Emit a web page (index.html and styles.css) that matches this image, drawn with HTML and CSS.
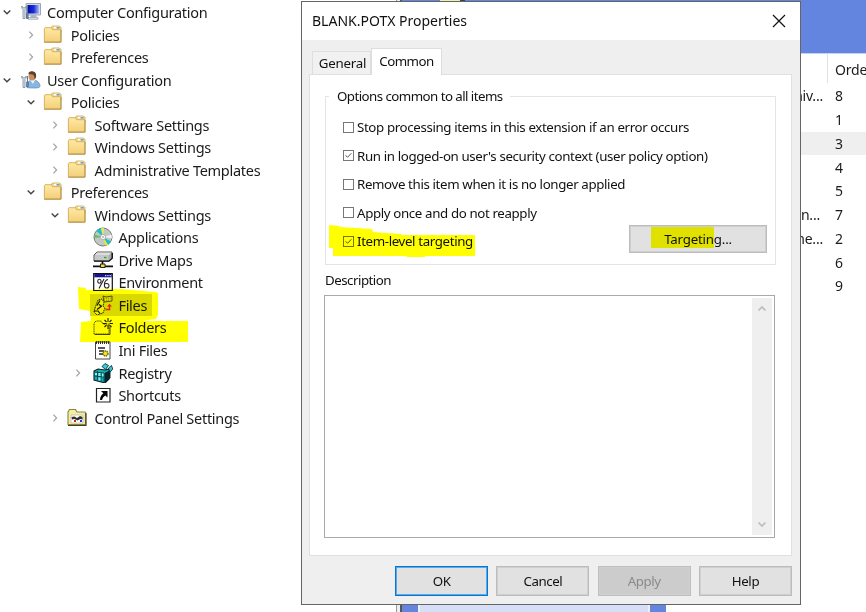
FILE: index.html
```
<!DOCTYPE html>
<html lang="en">
<head>
<meta charset="utf-8">
<title>Group Policy Preferences</title>
<link rel="stylesheet" href="styles.css">
</head>
<body>
<svg width="0" height="0" class="defs">
  <defs>
    <linearGradient id="fold" x1="0" y1="0" x2="0" y2="1"><stop offset="0" stop-color="#ffe9a6"/><stop offset="1" stop-color="#f3cf78"/></linearGradient>
    <linearGradient id="scr" x1="0" y1="0" x2="1" y2="0"><stop offset="0" stop-color="#0508a8"/><stop offset=".55" stop-color="#1b2fd6"/><stop offset="1" stop-color="#a6bcf4"/></linearGradient>
    <symbol id="folder" viewBox="0 0 20 20"><path d="M8.500 5.500V2l1-1h7l1.500 1.500V8z" fill="#f2d98c" stroke="#c9a54c" stroke-width=".8"/><path d="M11 2.600h5" stroke="#fff" stroke-width="1.800"/><path d="M13.500 2.800h3" stroke="#4d96d8" stroke-width="1.400"/><path d="M1.400 17V3.300l.6-.6h6.500l1.200 2h7.600l.6.500V17z" fill="url(#fold)" stroke="#d4ad55" stroke-width=".9"/><path d="M1.200 17.200h17M18 5v12" stroke="#b3924a" fill="none"/></symbol>
    <symbol id="computer" viewBox="0 0 20 20"><path d="M5 1.500h14.500V13H6z" fill="#d5d9e3" stroke="#9da5b4"/><path d="M6.500 3h11.500v8.500H6.500z" fill="url(#scr)"/><path d="M10 13h5l1 2.500H9z" fill="#aeb3bc"/><path d="M7 15.500h10v1.800H7z" fill="#d9dce2" stroke="#8f949c" stroke-width=".6"/><path d="M.8 4v2.200L2 7.500v9h2v-9l1.200-1.300V4L4 5.800H2z" fill="#dbe4ed" stroke="#6d7c8d" stroke-width=".7"/><path d="M6.200 5v6M5.500 11h1.600v5.500H5.500z" fill="#4f91c8" stroke="#56789b"/></symbol>
    <symbol id="user" viewBox="0 0 20 20"><path d="M6 17c0-5 2-7 6-7s7 3 7 6c0 2-3 2-6 2s-7 0-7-1z" fill="#87b6df" stroke="#5f8db8" stroke-width=".7"/><path d="M9 10l3 4 2-4z" fill="#eaf3fb"/><ellipse cx="11" cy="6" rx="3.500" ry="4.500" fill="#c98e61"/><path d="M7.500 4C7 .5 14 0 15 4c.6 3-.5 5-1.500 5 .2-3-1-4-2-4.500z" fill="#5f4030"/><path d="M.8 6v2.200L2 9.500v8h2v-8l1.200-1.300V6L4 7.800H2z" fill="#dbe4ed" stroke="#6d7c8d" stroke-width=".7"/><path d="M6.500 6v6M5.700 12h1.600v5H5.700z" fill="#4f91c8" stroke="#56789b"/></symbol>
    <symbol id="cd" viewBox="0 0 20 20"><circle cx="10" cy="10" r="9" fill="#c3c8c3" stroke="#777"/><path d="M10 10L3.500 4A9 9 0 0 1 8 1.300z" fill="#19bfd0"/><path d="M10 10L8 1.300l3-.2z" fill="#e9ee4b"/><path d="M10 10l8.700-2.500.3 4z" fill="#eee"/><path d="M10 10l8 4.500-3 3.500z" fill="#16bfcb"/><path d="M10 10l5.200 8-2.700.8z" fill="#e7e63a"/><path d="M10 10L1.500 7.500 1.300 11z" fill="#62c266"/><circle cx="10" cy="10" r="2.600" fill="#fff" stroke="#999" stroke-width=".7"/><circle cx="10" cy="10" r=".8" fill="#777"/></symbol>
    <symbol id="drive" viewBox="0 0 20 20"><path d="M4 2h15v6l-3 3H1V5z" fill="#aaa" stroke="#555"/><path d="M4 2.500h14.500l-3 3H1.500z" fill="#ddd"/><path d="M1.500 5.500h14v5h-14z" fill="#c8c8c8"/><path d="M1 11.200h15l3.300-3V3" fill="none" stroke="#111" stroke-width="1.300"/><path d="M11 7.500h2.500" stroke="#18a838" stroke-width="1.300"/><path d="M9.500 11v4M0 16.300h20" stroke="#111" stroke-width="1.700"/><path d="M7.500 14h4.500v3.500H7.500z" fill="#eadf27" stroke="#222"/></symbol>
    <symbol id="env" viewBox="0 0 20 20"><path d="M.7 1.500h18.600v17H.7z" fill="#fff" stroke="#111" stroke-width="1.200"/><path d="M1.300 2h17.400v3.300H1.300z" fill="#14148c"/><path d="M12 3.600h1.300m1 0h1.300m1 0h1.300" stroke="#ddd" stroke-width="1.300"/><g fill="none" stroke="#222" stroke-width="1.100"><ellipse cx="6.400" cy="9.300" rx="1.700" ry="2"/><path d="M11 7L6 16.500M15 7.500c-4.500 1-4.500 8-1.500 8.500s3.500-4.500.3-4.500-2.300 1-2.300 2.200"/></g></symbol>
    <symbol id="files" viewBox="0 0 20 20"><path d="M10 1l3 1 6-1v5l-8 1z" fill="#ddd" stroke="#333" stroke-width=".8"/><path d="M11 3.200h7m-7 2h6" stroke="#888" stroke-dasharray="1 1"/><path d="M2 13l3-8 4-1 2 3-1 4 2 2-2 5-6 2-3-3z" fill="#f0ee88" stroke="#222" stroke-dasharray="1.500 .8"/><path d="M1 16h4l2 2.500m-1-9l3 2m-5 3l4-3m-1-6l-3 5" fill="none" stroke="#111" stroke-width="1.200"/><path d="M12.500 14.500h4v-4" fill="none" stroke="#e02818" stroke-width="1.500"/><path d="M14 11.500l2.500-2.700 2.500 2.700z" fill="#e02818"/></symbol>
    <symbol id="newfolder" viewBox="0 0 20 20"><path d="M1 17V6l2-2h5l2 3h6v10z" fill="#fff9b8" stroke="#444" stroke-dasharray="1.200 .6"/><path d="M2 17.500h15V10" fill="none" stroke="#444"/><path d="M15 1v4m0 3v4M10 6.500h3.500m3 0H20M11.500 3l2 2m5-2l-2 2m-5 5l2-2m5 2l-2-2" stroke="#222" stroke-width="1.100"/></symbol>
    <symbol id="ini" viewBox="0 0 20 20"><path d="M2.500 2h14.500v17H2.500z" fill="#fff" stroke="#444"/><path d="M3.500 1v3m2-3v3m2-3v3m2-3v3m2-3v3m2-3v3m2-3v3" stroke="#333" stroke-width="1"/><path d="M5 8h7m-6 3h5m-5 3h4" stroke="#222" stroke-width="1.500"/><circle cx="12.500" cy="13.500" r="2.500" fill="#f4e52c" stroke="#776b00" stroke-width="1.500" stroke-dasharray="1.500 .6"/></symbol>
    <symbol id="registry" viewBox="0 0 20 20"><path d="M1 8l4-2 7 1 4-1v10l-4 4-11-3z" fill="#18adb0" stroke="#071f25" stroke-width="1.100"/><path d="M1 9l10 1v9M4.500 8v9.500m3.500-8v9M1 13l10 1" fill="none" stroke="#0b4c54"/><path d="M2 10h2v2H2zm3.500 0h2v3h-2zm0 4.500h2v3h-2zm3.500-4h1.500v3H9z" fill="#8cf0ef"/><path d="M11.500 10l6-3v8l-6 5z" fill="#06262c"/><path d="M9 3.500l3-3 3.500 2-3 4zM15.500 5l3-2.500 1.200 3.500-2.500 3z" fill="#35cbd0" stroke="#06363f" stroke-width=".9"/></symbol>
    <symbol id="shortcut" viewBox="0 0 20 20"><path d="M3.500 3.500h13.500v13.500h-13.500z" fill="#fff" stroke="#222" stroke-width="1.200"/><path d="M8 6h6.500v6.500L12.300 10.400Q9.500 12 9 15H7q0-4 3.300-6.700z" fill="#050505"/></symbol>
    <symbol id="panel" viewBox="0 0 20 20"><path d="M1 16.500V4l1.500-2.500h6L10 4h8l.5.600v12z" fill="#f7efa0" stroke="#8a8444" stroke-width="1.100"/><path d="M1 17.500h18V5" fill="none" stroke="#44401c" stroke-width="1.200"/><path d="M4 7h12v8H4z" fill="#fff" stroke="#aaa" stroke-width=".6"/><path d="M4.500 9l3-.5 2.500 1.500 3-2 2.500 1v2.500l-2-.5-3 1.500-3-1.500-2.500.5z" fill="#333"/><path d="M7 12h2v2H7z" fill="#d71d1d"/><path d="M13 12h2v2h-2z" fill="#2537c7"/></symbol>
    <symbol id="down" viewBox="0 0 10 10"><path d="M1.700 3.500L5 6.700l3.300-3.200" fill="none" stroke="#444" stroke-width="1.400"/></symbol>
    <symbol id="right" viewBox="0 0 10 10"><path d="M3.400 1.700L6.600 5 3.400 8.300" fill="none" stroke="#a3a3a3" stroke-width="1.200"/></symbol>
  </defs>
</svg>
<div class="console">
  <ul class="tree">
    <li class="l0"><svg class="tw"><use href="#down"/></svg><svg class="ic"><use href="#computer"/></svg><span>Computer Configuration</span></li>
    <li class="l1"><svg class="tw"><use href="#right"/></svg><svg class="ic"><use href="#folder"/></svg><span>Policies</span></li>
    <li class="l1"><svg class="tw"><use href="#right"/></svg><svg class="ic"><use href="#folder"/></svg><span>Preferences</span></li>
    <li class="l0"><svg class="tw"><use href="#down"/></svg><svg class="ic"><use href="#user"/></svg><span>User Configuration</span></li>
    <li class="l1"><svg class="tw"><use href="#down"/></svg><svg class="ic"><use href="#folder"/></svg><span>Policies</span></li>
    <li class="l2"><svg class="tw"><use href="#right"/></svg><svg class="ic"><use href="#folder"/></svg><span>Software Settings</span></li>
    <li class="l2"><svg class="tw"><use href="#right"/></svg><svg class="ic"><use href="#folder"/></svg><span>Windows Settings</span></li>
    <li class="l2"><svg class="tw"><use href="#right"/></svg><svg class="ic"><use href="#folder"/></svg><span>Administrative Templates</span></li>
    <li class="l1"><svg class="tw"><use href="#down"/></svg><svg class="ic"><use href="#folder"/></svg><span>Preferences</span></li>
    <li class="l2"><svg class="tw"><use href="#down"/></svg><svg class="ic"><use href="#folder"/></svg><span>Windows Settings</span></li>
    <li class="l3"><svg class="tw"></svg><svg class="ic"><use href="#cd"/></svg><span>Applications</span></li>
    <li class="l3"><svg class="tw"></svg><svg class="ic"><use href="#drive"/></svg><span>Drive Maps</span></li>
    <li class="l3"><svg class="tw"></svg><svg class="ic"><use href="#env"/></svg><span>Environment</span></li>
    <li class="l3 sel"><svg class="tw"></svg><svg class="ic"><use href="#files"/></svg><span>Files</span></li>
    <li class="l3"><svg class="tw"></svg><svg class="ic"><use href="#newfolder"/></svg><span>Folders</span></li>
    <li class="l3"><svg class="tw"></svg><svg class="ic"><use href="#ini"/></svg><span>Ini Files</span></li>
    <li class="l3"><svg class="tw"><use href="#right"/></svg><svg class="ic"><use href="#registry"/></svg><span>Registry</span></li>
    <li class="l3"><svg class="tw"></svg><svg class="ic"><use href="#shortcut"/></svg><span>Shortcuts</span></li>
    <li class="l2"><svg class="tw"><use href="#right"/></svg><svg class="ic"><use href="#panel"/></svg><span>Control Panel Settings</span></li>
  </ul>
  <div class="splitter"></div>
  <div class="pane">
    <div class="banner"><i></i></div>
    <div class="middle">
      <div class="side"><div class="card"></div></div>
      <div class="list">
        <div class="row head"><span class="name"></span><span class="order">Order</span></div>
        <div class="row"><span class="name">niv...</span><span class="order">8</span></div>
        <div class="row"><span class="name"></span><span class="order">1</span></div>
        <div class="row current"><span class="name"></span><span class="order">3</span></div>
        <div class="row"><span class="name"></span><span class="order">4</span></div>
        <div class="row"><span class="name"></span><span class="order">5</span></div>
        <div class="row"><span class="name wide">on...</span><span class="order">7</span></div>
        <div class="row"><span class="name">he...</span><span class="order">2</span></div>
        <div class="row"><span class="name"></span><span class="order">6</span></div>
        <div class="row"><span class="name"></span><span class="order">9</span></div>
      </div>
    </div>
  </div>
</div>

<section class="dialog">
  <header class="title"><span>BLANK.POTX Properties</span><svg width="14" height="14" viewBox="0 0 14 14"><path d="M1 1l12 12M13 1L1 13" stroke="#111" stroke-width="1.200"/></svg></header>
  <nav class="tabs"><span class="tab general"><b>General</b></span><span class="tab active"><b>Common</b></span></nav>
  <div class="page">
    <fieldset class="group">
      <legend>Options common to all items</legend>
      <label><i class="box"></i><span>Stop processing items in this extension if an error occurs</span></label>
      <label><i class="box"><svg viewBox="0 0 11 11"><path d="M2 5.300l2.300 2.400L9 2.800"/></svg></i><span>Run in logged-on user's security context (user policy option)</span></label>
      <label><i class="box"></i><span>Remove this item when it is no longer applied</span></label>
      <label><i class="box"></i><span>Apply once and do not reapply</span></label>
      <div class="last"><label><i class="box"><svg viewBox="0 0 11 11"><path d="M2 5.300l2.300 2.400L9 2.800"/></svg></i><span>Item-level targeting</span></label>
      <button class="targeting">Targeting...</button></div>
    </fieldset>
    <div class="desc">Description</div>
    <div class="memo"><div class="scroll"><svg viewBox="0 0 10 10"><path d="M1.500 6.500L5 3l3.500 3.500"/></svg><svg viewBox="0 0 10 10"><path d="M1.500 3.500L5 7l3.500-3.500"/></svg></div></div>
  </div>
  <footer class="actions"><button class="ok">OK</button><button>Cancel</button><button class="off">Apply</button><button>Help</button></footer>
</section>

<svg class="marker" width="866" height="612" viewBox="0 0 866 612">
  <path d="M78 287l8 1 0 2 35-1 34 3 3 1v22l-2 4-8 1-6 1h46v21H80l1-20 10-1-1-10-11-2z"/>
  <path d="M329 225l10 1 1 1 32 2 1 3 28 2 1 1h73v21h-50v1h-18l-1-1h-73v-8h-4z"/>
  <path d="M651 227h63v21h-63z"/>
</svg>
</body>
</html>
```
FILE: styles.css
```
* { box-sizing: border-box; }
body { margin: 0; width: 866px; height: 612px; overflow: hidden; position: relative; background: #fff; color: #1b1b1b; font-family: "Noto Sans", sans-serif; }
.defs { position: absolute; }
.console { display: flex; width: 866px; height: 612px; }
.tree { width: 396px; flex: none; margin: 0; padding: 1px 0 0 2px; list-style: none; font-size: 14.5px; letter-spacing: -0.28px; }
.tree li { display: flex; align-items: center; height: 22.53px; white-space: nowrap; }
.tree .l1 { padding-left: 23.8px; }
.tree .l2 { padding-left: 47.6px; }
.tree .l3 { padding-left: 71.4px; }
.tw { width: 10px; height: 10px; margin-right: 8px; flex: none; }
.ic { width: 20px; height: 20px; margin-right: 7px; flex: none; }
.l1 .ic, .l2 .ic { margin-left: -1px; margin-right: 8px; }
.l0 .ic { margin-left: 1px; margin-right: 6px; }
.l3 .ic { margin-left: 1.5px; margin-right: 5.5px; }
.sel { background: linear-gradient(#d9d9d9, #d9d9d9) 88px 0 / 62px 100% no-repeat; }
.splitter { width: 6px; flex: none; background: #efefef; border-left: 1px solid #999; border-right: 2px solid #555; }
.pane { flex: 1; min-width: 0; display: flex; flex-direction: column; }
.banner { height: 54px; background: #6384df; padding-left: 38px; border-bottom: 1px solid #c5d0f2; }
.banner i { display: block; width: 25px; height: 2px; background: #efefb0; border-right: 5px solid #39424c; }
.middle { flex: 1; display: flex; }
.side { width: 264px; flex: none; background: #6384df; padding: 0 16px; }
.card { height: 100%; background: #d7def7; border: solid #edf0fb; border-width: 0 2px; }
.list { flex: 1; min-width: 0; font-size: 14px; letter-spacing: -.2px; }
.row { display: flex; height: 23.75px; align-items: center; margin-left: 134px; }
.row.head { height: 30px; }
.head .name { align-self: flex-start; height: 29px; border-right: 1px solid #e2e2e2; }
.row .name { width: 28px; flex: none; margin-right: 7px; white-space: nowrap; display: flex; justify-content: flex-end; padding-right: 5px; }
.row .wide { padding-right: 8px; }
.row .order { flex: 1; white-space: nowrap; }
.current { background: #efefef; }

.dialog { position: absolute; left: 301px; top: 1px; width: 500px; height: 604px; border: 1px solid #656565; background: #efefef; display: flex; flex-direction: column; font-size: 13.3px; letter-spacing: -.4px; color: #111; }
.title { height: 38px; flex: none; background: #fff; display: flex; align-items: center; justify-content: space-between; padding: 0 14px 1px 10px; font-size: 14px; letter-spacing: 0; }
.tabs { height: 34px; flex: none; display: flex; align-items: flex-end; padding: 0 0 0 10px; }
.tab { height: 23px; border: 1px solid #dedede; border-bottom: 0; background: #f1f1f1; width: 59px; text-align: center; display: flex; align-items: center; justify-content: center; }
.tab b { font-weight: 400; }
.general { letter-spacing: -.2px; padding-left: 2px; }
.tab.active { background: #fff; width: 71px; height: 27px; margin-bottom: -1px; position: relative; letter-spacing: -.55px; padding-bottom: 2px; }
.page { margin: 0 8px 0 7px; height: 482px; flex: none; background: #fff; border: 1px solid #e0e0e0; padding: 13px 16px 0 14px; }
.group { margin: 0 0 0 1px; padding: 8px 8px 0 17px; border: 1px solid #e4e4e4; height: 177px; min-width: 0; width: 451px; }
.group legend { padding: 0 7px 0 8px; margin-left: -14px; height: 17px; line-height: 17px; letter-spacing: -.55px; }
.group label { display: flex; align-items: center; height: 28.5px; white-space: nowrap; letter-spacing: -.37px; }
.box { width: 11px; height: 11px; border: 1px solid #777; margin-right: 3px; flex: none; display: flex; }
.box svg { width: 9px; height: 9px; fill: none; stroke: #555; stroke-width: 1.2; }
.last { display: flex; justify-content: space-between; }
button { font: inherit; letter-spacing: inherit; color: #111; padding: 0 0 1px; border: 1px solid #bcbcbc; background: #e1e1e1; height: 30px; width: 93px; outline: 1px solid #cfcfcf; outline-offset: -2px; }
.targeting { width: 138px; height: 28px; margin-top: -2px; letter-spacing: -.2px; }
.desc { height: 18px; line-height: 18px; margin: 6px 0 6px 1px; letter-spacing: -.5px; }
.memo { height: 243px; border: 1px solid #a9a9a9; padding: 2px; display: flex; justify-content: flex-end; }
.scroll { width: 20px; background: #efefef; display: flex; flex-direction: column; justify-content: space-between; align-items: center; padding: 6px 0; }
.scroll svg { width: 10px; height: 10px; fill: none; stroke: #bcbcbc; stroke-width: 1.7; }
.actions { display: flex; gap: 8.3px; justify-content: flex-end; padding: 10px 8px 0 0; }
.ok { border-color: #0078d7; outline-color: #5ea9e3; }
.off { background: #cccccc; color: #8a8a8a; border-color: #bfbfbf; }
.marker { position: absolute; left: 0; top: 0; mix-blend-mode: multiply; fill: #ff0; pointer-events: none; }
```
